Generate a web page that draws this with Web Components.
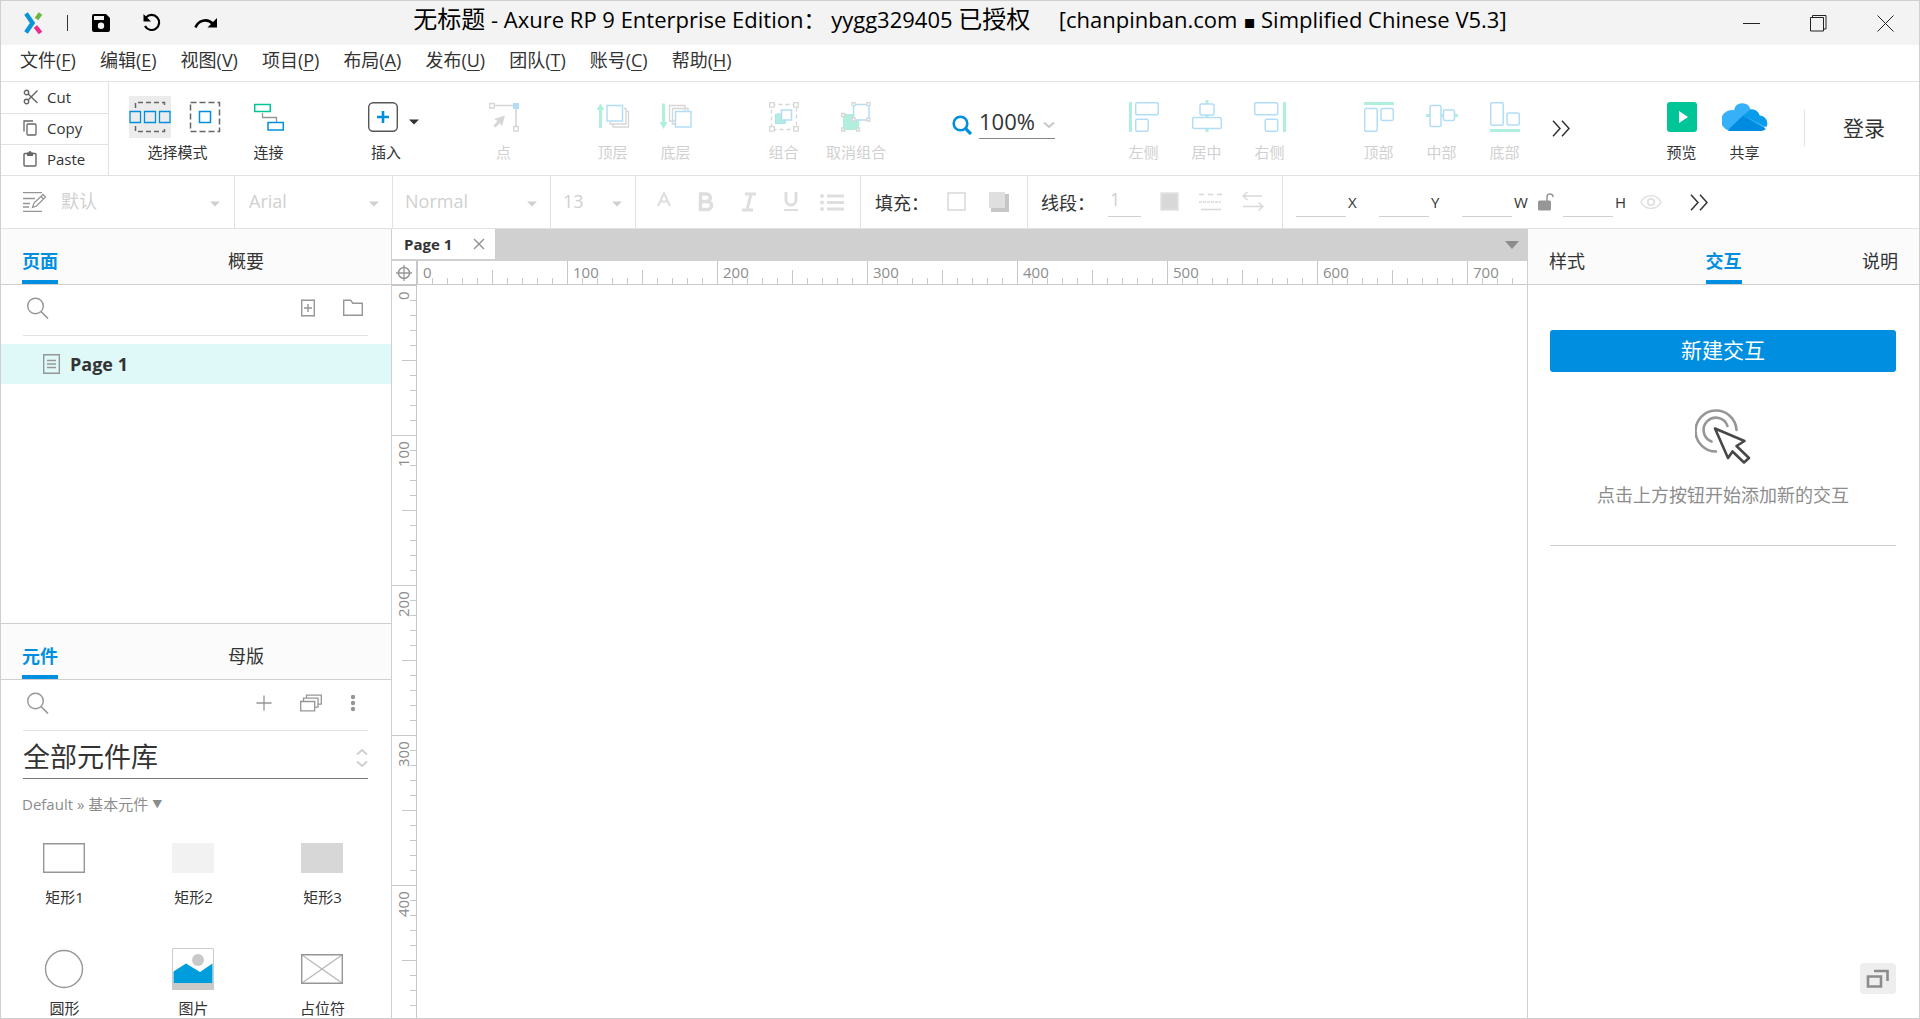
<!DOCTYPE html>
<html lang="zh-CN">
<head>
<meta charset="utf-8">
<title>无标题 - Axure RP 9</title>
<style>
    :root {
        --blue: #008fe0;
        --green: #00c596;
        --line: #e2e2e2;
        --edge: #cfcfcf;
        --text: #333;
        --muted: #8c8c8c;
        --off: #d0d0d0;
    }
    * { box-sizing: border-box; }
    body {
        margin: 0;
        color: var(--text);
        font-family: "Open Sans", "Noto Sans CJK SC", sans-serif;
    }
    main {
        display: grid;
        grid-template-columns: 391px minmax(0, 1fr) 392px;
        min-height: 0;
    }
    .left {
        display: grid;
        grid-template-rows: 394px minmax(0, 1fr);
        min-height: 0;
        border-right: 1px solid var(--edge);
    }
</style>
</head>
<body>
<app-window>
    <title-bar></title-bar>
    <menu-bar></menu-bar>
    <main-toolbar></main-toolbar>
    <format-bar></format-bar>
    <main>
        <div class="left">
            <pages-panel></pages-panel>
            <library-panel></library-panel>
        </div>
        <design-canvas></design-canvas>
        <interaction-panel></interaction-panel>
    </main>
</app-window>

<script>
const GREY = '#969696';
const OFF = '#d6d6d6';
const OFF_BLUE = '#b3ddf6';
const OFF_GREEN = '#b0eedd';

// [width, height, markup]
const ICONS = {
    logo: [20, 24, '<path d="M3 2.5 9.5 12 3 21.5" fill="none" stroke="#0c94d8" stroke-width="4.4"/><path d="M17.5 2.5 13.5 8" stroke="#6cb644" stroke-width="4.4"/><path d="M12.5 15.5 17.5 22" stroke="#ee2a8b" stroke-width="4.4"/>'],
    save: [18, 18, '<path fill="#000" fill-rule="evenodd" d="M2 0h12l4 4v12a2 2 0 0 1-2 2H2a2 2 0 0 1-2-2V2a2 2 0 0 1 2-2zm0 2v4h10V2zm7 6.500a3.200 3.200 0 1 0 0 6.400 3.200 3.200 0 0 0 0-6.400z"/>'],
    undo: [20, 20, '<path d="M4 4.500A7.500 7.500 0 1 1 3 13" fill="none" stroke="#000" stroke-width="2.200"/><path d="M1.500 1v7.500H9z"/>'],
    redo: [24, 12, '<path d="M1.500 10.500C4 3.500 13 .5 19 7" fill="none" stroke="#000" stroke-width="2.600"/><path d="M23 1v9.500h-9.500z"/>'],
    minimise: [17, 17, '<path d="M0 8.500h17" stroke="#222"/>'],
    maximise: [17, 17, '<path d="M.5 2.500h13v13.500H.5zM2.500 2.500V.5h13.500v13.500h-2.500" fill="none" stroke="#222"/>'],
    close: [17, 17, '<path d="M.5.500l16 16M16.500.500l-16 16" stroke="#222"/>'],
    cut: [16, 16, '<g fill="none" stroke="#666" stroke-width="1.400"><circle cx="3.500" cy="3.500" r="2.200"/><circle cx="3.500" cy="12.500" r="2.200"/><path d="M5.200 5 14.500 14M5.200 11 14.500 1.500"/></g>'],
    copy: [14, 16, '<g fill="none" stroke="#666" stroke-width="1.300"><path d="M1 11.500V1h9"/><rect x="4" y="4" width="9" height="11" rx="1"/></g>'],
    paste: [14, 16, '<rect x="1" y="2.500" width="12" height="12.500" rx="1" fill="none" stroke="#666" stroke-width="1.400"/><path d="M4 1.500h1.500a1.500 1.500 0 0 1 3 0H10V5H4z" fill="#666"/>'],
    intersect: [42, 42, '<path d="M6.500 12V6.500h29V12M6.500 30v5.500h29V30" fill="none" stroke="#666" stroke-width="1.500" stroke-dasharray="5 3"/><g fill="#ececec" stroke="#008fe0" stroke-width="1.300"><path d="M1 15.500h10.500v11H1zM15.500 15.500h11v11h-11zM30.500 15.500H41v11H30.500z"/></g>'],
    contain: [42, 42, '<rect x="6.500" y="6.500" width="29" height="29" fill="none" stroke="#666" stroke-width="1.500" stroke-dasharray="6 3"/><path d="M15.500 15.500h11v11h-11z" fill="#fff" stroke="#008fe0" stroke-width="1.500"/>'],
    connect: [30, 30, '<path d="M8.500 11v4.500h14V20" fill="none" stroke="#969696" stroke-width="1.300"/><path d="M.7 2.500h15.500v7H.7z" fill="none" stroke="#00c596" stroke-width="1.500"/><path d="M14 20.500h15.300v7.500H14z" fill="none" stroke="#008fe0" stroke-width="1.500"/>'],
    insert: [30, 30, '<rect x=".7" y=".7" width="28.600" height="28.600" rx="4.500" fill="none" stroke="#555" stroke-width="1.400"/><path d="M15 9v12M9 15h12" stroke="#008fe0" stroke-width="2.600"/>'],
    point: [30, 30, `<path d="M5 3.500h20M27 6v18" stroke="${OFF}" stroke-width="1.600"/><path d="M.7 1.500h4.500V6H.7zM24.700 24.500h4.500V29h-4.500z" fill="#fff" stroke="${OFF}" stroke-width="1.300"/><path d="M24 1h6v6h-6z" fill="${OFF_BLUE}"/><path d="M16 13.500 5 17l3.500 2-4 4.500 2 2 4.500-4.500 2 3.500z" fill="${OFF}"/>`],
    front: [34, 30, `<path d="M4.500 26V5" stroke="${OFF_GREEN}" stroke-width="3"/><path d="M.5 8 4.500 1.500 8.500 8z" fill="${OFF_GREEN}"/><g fill="none" stroke="${OFF}" stroke-width="1.300"><path d="M28 6.500h2V22H14v-2M30 9.500h2.500v15.500H17v-3"/></g><path d="M11 3.500h15.500V19H11z" fill="#fff" stroke="${OFF_BLUE}" stroke-width="1.500"/>`],
    back: [34, 30, `<path d="M4.500 1.500V22" stroke="${OFF_GREEN}" stroke-width="3"/><path d="M.5 20 4.500 27 8.500 20z" fill="${OFF_GREEN}"/><g fill="#fff" stroke="${OFF}" stroke-width="1.300"><path d="M10.500 3.500H26V19H10.500zM13.500 6.500H29V22H13.500z"/></g><path d="M16.500 9.500H32V25H16.500z" fill="#fff" stroke="${OFF_BLUE}" stroke-width="1.500"/>`],
    group: [30, 30, `<path d="M2.500 2.500h25v25h-25z" fill="none" stroke="${OFF}" stroke-width="1.300" stroke-dasharray="4 3"/><g fill="#fff" stroke="${OFF}" stroke-width="1.300"><path d="M.7.700h4.500v4.500H.7zM24.700.700h4.500v4.500h-4.500zM.7 24.700h4.500v4.500H.7zM24.700 24.700h4.500v4.500h-4.500z"/></g><path d="M6 12h11v10H6z" fill="${OFF_GREEN}"/><path d="M6.500 12h9v9.500h-9z" fill="none" stroke="${OFF_BLUE}"/><path d="M12.500 8h10v10h-10z" fill="#fff" stroke="${OFF_BLUE}" stroke-width="1.500"/>`],
    ungroup: [30, 30, `<path d="M2 12h16v16H2z" fill="${OFF_GREEN}"/><path d="M12.500 2.500h15.500V18H12.500z" fill="#fff" stroke="${OFF_BLUE}" stroke-width="1.500"/><g fill="#fff" stroke="${OFF}" stroke-width="1.300"><path d="M11 .7h3v3h-3zM26 .7h3v3h-3zM26 16h3v3h-3zM11 16h3v3h-3zM.7 11.500h3v3h-3zM.7 26h3v3h-3zM15.500 26h3v3h-3z"/></g>`],
    zoom: [20, 20, '<circle cx="8.500" cy="8.500" r="6.800" fill="none" stroke="#008fe0" stroke-width="2.600"/><path d="M13.500 13.500 19 19" stroke="#008fe0" stroke-width="3.200"/>'],
    chevron: [12, 8, '<path d="M1 1.500 6 6l5-4.500" fill="none" stroke="#c8c8c8" stroke-width="2"/>'],
    caret: [10, 6, '<path d="M0 .5h10L5 5.500z" fill="currentColor"/>'],
    caretBig: [14, 8, '<path d="M0 0h14L7 8z" fill="currentColor"/>'],
    alignLeft: [30, 30, `<path d="M1.500 0v30" stroke="${OFF_GREEN}" stroke-width="3"/><g fill="none" stroke="${OFF_BLUE}" stroke-width="1.500"><rect x="6.700" y=".7" width="22.600" height="12" rx="1.500"/><rect x="6.700" y="17.200" width="12.500" height="12" rx="1.500"/></g>`],
    alignCenter: [30, 34, `<path d="M15 0v32" stroke="${OFF_GREEN}" stroke-width="3"/><g fill="#fff" stroke="${OFF_BLUE}" stroke-width="1.500"><rect x="8" y="4" width="14" height="11" rx="1.500"/><rect x=".7" y="17.500" width="28.600" height="11" rx="1.500"/></g>`],
    alignRight: [32, 30, `<path d="M30.500 0v30" stroke="${OFF_GREEN}" stroke-width="3"/><g fill="none" stroke="${OFF_BLUE}" stroke-width="1.500"><rect x=".7" y=".7" width="23" height="12" rx="1.500"/><rect x="11.200" y="17.200" width="12.500" height="12" rx="1.500"/></g>`],
    alignTop: [30, 30, `<path d="M0 1.500h30" stroke="${OFF_GREEN}" stroke-width="3"/><g fill="none" stroke="${OFF_BLUE}" stroke-width="1.500"><rect x=".7" y="6.500" width="12.500" height="22.800" rx="1.500"/><rect x="17" y="6.500" width="12.300" height="12" rx="1.500"/></g>`],
    alignMiddle: [32, 30, `<path d="M0 13.500h32" stroke="${OFF_GREEN}" stroke-width="3"/><g fill="#fff" stroke="${OFF_BLUE}" stroke-width="1.500"><rect x="4" y="3.500" width="11" height="21" rx="1.500"/><rect x="17.500" y="8" width="11" height="10.500" rx="1.500"/></g>`],
    alignBottom: [30, 30, `<path d="M0 28.500h30" stroke="${OFF_GREEN}" stroke-width="3"/><g fill="none" stroke="${OFF_BLUE}" stroke-width="1.500"><rect x=".7" y=".7" width="12.500" height="22.500" rx="1.500"/><rect x="17" y="11" width="12.300" height="12" rx="1.500"/></g>`],
    more: [18, 17, '<path d="M1 .7 8 8.500 1 16.300M10 .7l7 7.800-7 7.800" fill="none" stroke="#333" stroke-width="1.500"/>'],
    preview: [30, 30, '<rect width="30" height="30" rx="3" fill="#00c596"/><path d="M12 9v12l9-6z" fill="#fff"/>'],
    cloud: [46, 30, '<path d="M7.500 29A10.500 10.500 0 0 1 12 8.200 8.500 8.500 0 0 1 28.500 7.500 8 8 0 0 1 37.500 13.500 8 8 0 0 1 37.500 29z" fill="#36b0f8"/><path d="M21 13.500 28.500 7.500A8 8 0 0 1 37.500 13.500 8 8 0 0 1 44.500 25z" fill="#089ceb"/><path d="M6 28 21 13.500 44 27a8 8 0 0 1-6.500 2h-30z" fill="#008be0"/>'],
    styleEdit: [24, 20, `<g fill="none" stroke="${GREY}" stroke-width="1.300"><path d="M0 .7h19M0 6.500h12M0 11.500h7M0 15h6M0 19.300h19"/><path d="M9.500 15.500 11 11 20 2.500l2.500 2.500-9 9zM18 4.500l2.500 2.500"/></g>`],
    bold: [16, 20, `<path d="M2.500 2h6a3.700 3.700 0 0 1 0 7.500h-6zM2.500 9.500h7a4 4 0 0 1 0 8h-7z" fill="none" stroke="#dedede" stroke-width="3.500"/>`],
    italic: [16, 20, '<path d="M4 2h11M1 18h11M10 2 6 18" stroke="#dedede" stroke-width="3"/>'],
    underline: [14, 20, '<path d="M2 0v8a5 5 0 0 0 10 0V0" fill="none" stroke="#dedede" stroke-width="3"/><path d="M0 18h14" stroke="#dedede" stroke-width="2"/>'],
    colour: [14, 20, '<path d="M1 14 7 1l6 13M3 9.500h8" fill="none" stroke="#dedede" stroke-width="2"/>'],
    list: [24, 20, '<path d="M7 4h17M7 10.500h17M7 17h17" stroke="#dedede" stroke-width="3"/><g fill="#dedede"><circle cx="2" cy="4" r="2"/><circle cx="2" cy="10.500" r="2"/><circle cx="2" cy="17" r="2"/></g>'],
    fill: [20, 20, '<path d="M1 1h17v17H1z" fill="#fff" stroke="#d8d8d8" stroke-width="1.500"/>'],
    shadow: [20, 20, '<path d="M2 2h18v18H2z" fill="#c6c6c6"/><path d="M0 0h16v16H0z" fill="#dfdfdf"/>'],
    lineColour: [20, 20, '<path d="M1 1h17v17H1z" fill="#d8d8d8" stroke="#e2e2e2" stroke-width="1.500"/>'],
    dashes: [24, 20, '<g stroke="#d8d8d8" stroke-width="1.500"><path d="M0 2.500h24" stroke-dasharray="5 4"/><path d="M0 10h22" stroke-dasharray="3 1"/><path d="M2 17.500h20"/></g>'],
    arrows: [22, 20, '<path d="M20 4H1M5.500 0 1 4l4.500 4M1 14.500h20M16.500 10.500l4.500 4-4.500 4" fill="none" stroke="#d8d8d8" stroke-width="1.500"/>'],
    lock: [16, 18, '<rect y="7.500" width="13" height="10" rx="1.500" fill="#969696"/><path d="M9 8V4a3 3 0 0 1 6 0" fill="none" stroke="#969696" stroke-width="1.500"/>'],
    eye: [22, 16, '<path d="M1 8C5-.5 17-.5 21 8 17 16.500 5 16.500 1 8z" fill="none" stroke="#e0e0e0" stroke-width="1.500"/><circle cx="11" cy="8" r="3.200" fill="none" stroke="#e0e0e0" stroke-width="1.800"/>'],
    search: [22, 22, `<circle cx="8.500" cy="9" r="7.800" fill="none" stroke="${GREY}" stroke-width="1.400"/><path d="m14 14.500 7 7" stroke="${GREY}" stroke-width="1.600"/>`],
    addPage: [14, 18, `<path d="M.7 1.200h12.600v15.600H.7zM7 5v8M3 9h8" fill="none" stroke="${GREY}" stroke-width="1.400"/>`],
    folder: [20, 18, `<path d="M.7 16.300V1.200h7l2 3h9.600v12.100z" fill="none" stroke="${GREY}" stroke-width="1.400"/>`],
    page: [18, 20, `<path d="M.7.700h15.600v18.600H.7zM4 6.500h9M4 10h9M4 13.500h9" fill="none" stroke="${GREY}" stroke-width="1.400"/>`],
    plus: [16, 16, `<path d="M8 .5v15M.5 8h15" stroke="${GREY}" stroke-width="1.300"/>`],
    stack: [22, 18, `<g fill="none" stroke="${GREY}" stroke-width="1.300"><path d="M.7 7.500h14v9.300H.7zM3.500 7V4.200h14.500v9H15M6.500 4V1.200h14.800v9h-3"/></g>`],
    dots: [6, 18, `<g fill="${GREY}"><circle cx="3" cy="3" r="2.200"/><circle cx="3" cy="9" r="2.200"/><circle cx="3" cy="15" r="2.200"/></g>`],
    updown: [12, 20, '<path d="M1 6.500 6 2l5 4.500M1 13.500 6 18l5-4.500" fill="none" stroke="#cfcfcf" stroke-width="2"/>'],
    rect1: [42, 42, '<path d="M.7 6.700h40.600v28.600H.7z" fill="#fff" stroke="#969696" stroke-width="1.400"/>'],
    rect2: [42, 42, '<path d="M0 6h42v30H0z" fill="#f2f2f2"/>'],
    rect3: [42, 42, '<path d="M0 6h42v30H0z" fill="#d7d7d7"/>'],
    circle: [42, 42, '<circle cx="21" cy="21" r="18.500" fill="#fff" stroke="#969696" stroke-width="1.400"/>'],
    image: [42, 42, '<path d="M.5.500h41v41H.5z" fill="#fff" stroke="#ccc"/><path d="M0 35h42v7H0z" fill="#c9cac8"/><circle cx="26" cy="12" r="6" fill="#c9cac8"/><path d="M1.500 23.500 14 15.500l14 8.500 12.500-8.500V35h-39z" fill="#009ddc"/>'],
    placeholder: [42, 42, '<path d="M.7 6.700 41.300 35.300M41.300 6.700.7 35.300" stroke="#b8b8b8" stroke-width="1.300"/><path d="M.7 6.700h40.600v28.600H.7z" fill="none" stroke="#969696" stroke-width="1.400"/>'],
    tabClose: [12, 12, `<path d="m1 1 10 10M11 1 1 11" stroke="${GREY}" stroke-width="1.500"/>`],
    origin: [16, 16, `<circle cx="8" cy="8" r="5.500" fill="none" stroke="${GREY}" stroke-width="1.500"/><path d="M8 0v16M0 8h16" stroke="${GREY}" stroke-width="1.300"/>`],
    tap: [56, 56, '<g fill="none" stroke="#969696" stroke-width="2.600" stroke-linecap="round"><path d="M21 42.500A20.500 20.500 0 1 1 41.500 21"/><path d="M16.500 32.500A12.300 12.300 0 1 1 32.500 17"/></g><path d="M20 19.500 49.500 32l-8 5L54 49l-5 4.500L37.500 42.500 33 49z" fill="#fff" stroke="#484848" stroke-width="2.600" stroke-linejoin="round"/>'],
    windows: [24, 20, '<path d="M2 7.500h13v10H2z" fill="none" stroke="#8c8c8c" stroke-width="2.600"/><path d="M8 2h13.500v10" fill="none" stroke="#8c8c8c" stroke-width="2.600"/>']
};

const BASE = `
    *, *::before { box-sizing: border-box; }
    button { margin: 0; padding: 0; border: 0; background: none; color: inherit; font: inherit; }
    input, select { margin: 0; padding: 0; border: 0; border-radius: 0; background: none; color: inherit; font: inherit; appearance: none; opacity: 1; min-width: 0; }
`;

class UiIcon extends HTMLElement {
    connectedCallback() {
        this.attachShadow({ mode: 'open' });
        const [w, h, body] = ICONS[this.getAttribute('name')];
        this.shadowRoot.innerHTML = `
            <style>
                :host { display: block; flex: none; }
                svg { display: block; }
            </style>
            <svg width="${w}" height="${h}" viewBox="0 0 ${w} ${h}" aria-hidden="true">${body}</svg>
        `;
    }
}

class AppWindow extends HTMLElement {
    connectedCallback() {
        this.attachShadow({ mode: 'open' });
        this.shadowRoot.innerHTML = `
            <style>
                :host {
                    display: grid;
                    grid-template-rows: auto auto auto auto minmax(0, 1fr);
                    grid-template-columns: minmax(0, 1fr);
                    box-sizing: border-box;
                    height: 100vh;
                    overflow: hidden;
                    border: 1px solid var(--edge);
                    background: #fff;
                }
            </style>
            <slot></slot>
        `;
    }
}

class TitleBar extends HTMLElement {
    connectedCallback() {
        this.attachShadow({ mode: 'open' });
        this.shadowRoot.innerHTML = `
            <style>
                ${BASE}
                :host {
                    display: grid;
                    grid-template-columns: 1fr auto 1fr;
                    height: 44px;
                    background: #f3f3f3;
                    color: #000;
                }
                .quick { display: flex; align-items: center; gap: 32px; padding-left: 22px; }
                .sep { width: 1px; height: 16px; background: #333; margin: 0 -8px; }
                h1 { margin: 0; font-size: 22px; line-height: 36px; font-weight: 400; white-space: pre; }
                h1 span { font-size: 24px; }
                h1 i { font: 18px "DejaVu Sans", sans-serif; }
                .controls { display: flex; justify-content: flex-end; }
                .controls button { width: 67px; display: grid; place-items: center; }
            </style>
            <div class="quick">
                <ui-icon name="logo"></ui-icon>
                <span class="sep"></span>
                <button aria-label="保存"><ui-icon name="save"></ui-icon></button>
                <button aria-label="撤销"><ui-icon name="undo"></ui-icon></button>
                <button aria-label="重做"><ui-icon name="redo"></ui-icon></button>
            </div>
            <h1><span>无标题</span> - Axure RP 9 Enterprise Edition： yygg329405 <span>已授权</span>     [chanpinban.com <i>▪</i> Simplified Chinese V5.3]</h1>
            <div class="controls">
                <button aria-label="最小化"><ui-icon name="minimise"></ui-icon></button>
                <button aria-label="最大化"><ui-icon name="maximise"></ui-icon></button>
                <button aria-label="关闭"><ui-icon name="close"></ui-icon></button>
            </div>
        `;
    }
}

class MenuBar extends HTMLElement {
    connectedCallback() {
        const items = [['文件', 'F'], ['编辑', 'E'], ['视图', 'V'], ['项目', 'P'], ['布局', 'A'], ['发布', 'U'], ['团队', 'T'], ['账号', 'C'], ['帮助', 'H']];
        this.attachShadow({ mode: 'open' });
        this.shadowRoot.innerHTML = `
            <style>
                ${BASE}
                :host { display: block; border-bottom: 1px solid var(--line); }
                nav { display: flex; gap: 24px; height: 36px; padding: 0 0 6px 19px; }
                button { font-size: 18px; line-height: 30px; white-space: nowrap; }
                u { text-underline-offset: 3px; text-decoration-thickness: 1px; }
            </style>
            <nav>${items.map(([t, k]) => `<button>${t}(<u>${k}</u>)</button>`).join('')}</nav>
        `;
    }
}

class ToolButton extends HTMLElement {
    connectedCallback() {
        const off = this.hasAttribute('disabled') ? 'disabled' : '';
        this.attachShadow({ mode: 'open' });
        this.shadowRoot.innerHTML = `
            <style>
                ${BASE}
                :host { display: block; width: 63px; flex: none; }
                :host([wide]) { width: 82px; }
                button { width: 100%; display: flex; flex-direction: column; align-items: center; gap: 4px; }
                button:disabled { color: var(--off); }
                .icon { height: 42px; display: grid; place-items: center; }
                .label { font-size: 15px; line-height: 20px; white-space: nowrap; }
            </style>
            <button ${off}>
                <span class="icon"><slot></slot></span>
                <span class="label">${this.getAttribute('label')}</span>
            </button>
        `;
    }
}

class MainToolbar extends HTMLElement {
    connectedCallback() {
        const tool = (label, icon, attrs = 'disabled') =>
            `<tool-button label="${label}" ${attrs}><ui-icon name="${icon}"></ui-icon></tool-button>`;
        this.attachShadow({ mode: 'open' });
        this.shadowRoot.innerHTML = `
            <style>
                ${BASE}
                :host { display: flex; height: 94px; border-bottom: 1px solid var(--line); }
                .clip { flex: none; width: 108px; display: grid; grid-template-rows: repeat(3, 1fr); border-right: 1px solid var(--line); }
                .clip button { display: grid; grid-template-columns: 24px auto; justify-content: start; align-items: center; padding: 0 0 2px 22px; font-size: 15px; line-height: 20px; text-align: left; }
                .clip button + button { border-top: 1px solid var(--line); }
                .tools { flex: 1; display: flex; align-items: flex-start; padding: 14px 34px 0 20px; }
                .group { display: flex; }
                .modes { display: grid; grid-template-columns: 42px 42px; column-gap: 13px; row-gap: 4px; justify-items: center; margin-right: 11px; }
                .modes [aria-pressed="true"] { background: #ececec; }
                .label { font-size: 15px; line-height: 20px; }
                .modes .label { grid-column: 1 / -1; }
                .insert { display: grid; grid-template-columns: 30px 10px; column-gap: 11px; row-gap: 4px; margin: 0 53px 0 68px; }
                .insert .pic { height: 42px; display: flex; align-items: center; }
                .insert .pic + .pic { padding-top: 10px; }
                .insert .label { grid-column: 1 / -1; padding-left: 3px; text-align: left; }
                .order { margin-left: 46px; }
                .grouping { margin-left: 45px; }
                .zoom { display: grid; grid-template-columns: 20px 76px; column-gap: 7px; align-items: center; margin: 11px 57px 0 55px; }
                .zoom ui-icon { margin-top: 4px; }
                .zoom .box { display: grid; height: 32px; align-items: center; border-bottom: 1px solid #888; }
                .zoom .box > * { grid-area: 1 / 1; }
                .zoom select { width: 100%; padding-bottom: 4px; font-size: 22px; line-height: 28px; }
                .zoom .box ui-icon { justify-self: end; pointer-events: none; }
                .vertical { margin: 0 16px 0 46px; }
                .more { margin-top: 24px; }
                .publish { margin-left: auto; }
                .login { margin: 14px 0 0 28px; padding-left: 38px; height: 36px; border-left: 1px solid var(--line); font-size: 21px; line-height: 34px; }
            </style>
            <div class="clip">
                <button><ui-icon name="cut"></ui-icon>Cut</button>
                <button><ui-icon name="copy"></ui-icon>Copy</button>
                <button><ui-icon name="paste"></ui-icon>Paste</button>
            </div>
            <div class="tools">
                <div class="modes">
                    <button aria-label="相交选中" aria-pressed="true"><ui-icon name="intersect"></ui-icon></button>
                    <button aria-label="包含选中" aria-pressed="false"><ui-icon name="contain"></ui-icon></button>
                    <span class="label">选择模式</span>
                </div>
                ${tool('连接', 'connect', '')}
                <button class="insert">
                    <span class="pic"><ui-icon name="insert"></ui-icon></span>
                    <span class="pic"><ui-icon name="caret"></ui-icon></span>
                    <span class="label">插入</span>
                </button>
                ${tool('点', 'point')}
                <div class="group order">${tool('顶层', 'front')}${tool('底层', 'back')}</div>
                <div class="group grouping">${tool('组合', 'group')}${tool('取消组合', 'ungroup', 'wide disabled')}</div>
                <div class="zoom">
                    <ui-icon name="zoom"></ui-icon>
                    <div class="box">
                        <select aria-label="缩放"><option>100%</option></select>
                        <ui-icon name="chevron"></ui-icon>
                    </div>
                </div>
                <div class="group">${tool('左侧', 'alignLeft')}${tool('居中', 'alignCenter')}${tool('右侧', 'alignRight')}</div>
                <div class="group vertical">${tool('顶部', 'alignTop')}${tool('中部', 'alignMiddle')}${tool('底部', 'alignBottom')}</div>
                <button class="more" aria-label="更多"><ui-icon name="more"></ui-icon></button>
                <div class="group publish">${tool('预览', 'preview', '')}${tool('共享', 'cloud', '')}</div>
                <button class="login">登录</button>
            </div>
        `;
    }
}

class FormatBar extends HTMLElement {
    connectedCallback() {
        const pick = (name, value, cls = '') => `
            <div class="cell pick ${cls}">
                <select aria-label="${name}" disabled><option>${value}</option></select>
                <ui-icon name="caret"></ui-icon>
            </div>`;
        const icon = (name, label) => `<button disabled aria-label="${label}"><ui-icon name="${name}"></ui-icon></button>`;
        const field = name => `<span class="field"><input id="${name}" type="text" disabled><label for="${name}">${name.toUpperCase()}</label></span>`;
        this.attachShadow({ mode: 'open' });
        this.shadowRoot.innerHTML = `
            <style>
                ${BASE}
                :host { display: flex; height: 53px; border-bottom: 1px solid var(--line); font-size: 18px; }
                .cell { display: flex; align-items: center; flex: none; border-right: 1px solid var(--line); }
                .pick { display: grid; align-items: center; padding: 0 13px 0 12px; color: var(--off); }
                .pick > * { grid-area: 1 / 1; }
                .pick select { width: 100%; line-height: 24px; padding-bottom: 2px; opacity: 1; }
                .pick > ui-icon { justify-self: end; padding-top: 4px; pointer-events: none; }
                .style { width: 234px; padding: 0 14px 0 22px; }
                .style .mark { justify-self: start; padding: 0; }
                .style select { padding-left: 38px; }
                .font, .weight { width: 158px; }
                .font { padding-left: 14px; }
                .size { width: 85px; }
                .text { width: 225px; gap: 27px; padding-left: 21px; }
                .text button:last-child { margin-left: -5px; }
                .fill { width: 167px; padding-left: 14px; }
                .fill span { margin-right: 18px; }
                .fill button + button { margin-left: 22px; }
                .stroke { width: 255px; padding-left: 13px; gap: 19px; }
                .stroke label { margin-right: -6px; }
                .stroke input { width: 33px; height: 30px; padding: 0 0 6px 2px; border-bottom: 1px solid var(--off); color: var(--off); }
                .place { display: flex; align-items: center; padding-left: 13px; }
                .field { display: flex; align-items: center; gap: 2px; width: 83px; }
                .field input { width: 50px; height: 30px; border-bottom: 1px solid var(--off); }
                .field label { font-size: 15px; }
                .lock { margin: 0 9px 0 -7px; }
                .eye { margin-left: -6px; }
                .more { margin-left: 28px; }
            </style>
            <div class="cell pick style">
                <ui-icon class="mark" name="styleEdit"></ui-icon>
                <select aria-label="样式" disabled><option>默认</option></select>
                <ui-icon name="caret"></ui-icon>
            </div>
            ${pick('字体', 'Arial', 'font')}
            ${pick('字重', 'Normal', 'weight')}
            ${pick('字号', '13', 'size')}
            <div class="cell text">
                ${icon('colour', '文字颜色')}${icon('bold', '粗体')}${icon('italic', '斜体')}${icon('underline', '下划线')}${icon('list', '列表')}
            </div>
            <div class="cell fill">
                <span>填充：</span>${icon('fill', '填充颜色')}${icon('shadow', '阴影')}
            </div>
            <div class="cell stroke">
                <label for="stroke">线段：</label><input id="stroke" type="text" value="1" disabled>
                ${icon('lineColour', '线段颜色')}${icon('dashes', '线段类型')}${icon('arrows', '箭头')}
            </div>
            <div class="place">
                ${field('x')}${field('y')}${field('w')}
                <button class="lock" aria-label="锁定比例"><ui-icon name="lock"></ui-icon></button>
                ${field('h')}
                <button class="eye" disabled aria-label="可见"><ui-icon name="eye"></ui-icon></button>
                <button class="more" aria-label="更多"><ui-icon name="more"></ui-icon></button>
            </div>
        `;
    }
}

class PanelTabs extends HTMLElement {
    connectedCallback() {
        const active = this.getAttribute('active');
        const tabs = this.getAttribute('tabs').split(',');
        this.attachShadow({ mode: 'open' });
        this.shadowRoot.innerHTML = `
            <style>
                ${BASE}
                :host { display: flex; height: 56px; padding: 0 21px; background: #fbfbfb; border-bottom: 1px solid var(--edge); }
                :host([split]) { gap: 170px; }
                :host([spread]) { justify-content: space-between; }
                button { padding-top: 12px; border-bottom: 4px solid transparent; font-size: 18px; line-height: 26px; }
                button[aria-selected="true"] { color: var(--blue); border-color: var(--blue); font-weight: 700; }
            </style>
            ${tabs.map(t => `<button role="tab" aria-selected="${t === active}">${t}</button>`).join('')}
        `;
    }
}

class PagesPanel extends HTMLElement {
    connectedCallback() {
        this.attachShadow({ mode: 'open' });
        this.shadowRoot.innerHTML = `
            <style>
                ${BASE}
                :host { display: block; }
                .bar { display: flex; align-items: center; height: 51px; margin: 0 23px 0 22px; padding: 0 5px 4px 4px; border-bottom: 1px solid var(--line); }
                .bar button:nth-child(2) { margin-left: auto; margin-right: 28px; }
                .row { display: flex; align-items: center; gap: 9px; width: 100%; height: 40px; margin-top: 8px; padding-left: 42px; background: #dff9f9; font-size: 18px; font-weight: 700; }
            </style>
            <panel-tabs split tabs="页面,概要" active="页面"></panel-tabs>
            <div class="bar">
                <button aria-label="搜索"><ui-icon name="search"></ui-icon></button>
                <button aria-label="添加页面"><ui-icon name="addPage"></ui-icon></button>
                <button aria-label="添加文件夹"><ui-icon name="folder"></ui-icon></button>
            </div>
            <button class="row"><ui-icon name="page"></ui-icon>Page 1</button>
        `;
    }
}

class LibraryPanel extends HTMLElement {
    connectedCallback() {
        const widgets = [['矩形1', 'rect1'], ['矩形2', 'rect2'], ['矩形3', 'rect3'], ['圆形', 'circle'], ['图片', 'image'], ['占位符', 'placeholder']];
        this.attachShadow({ mode: 'open' });
        this.shadowRoot.innerHTML = `
            <style>
                ${BASE}
                :host { display: block; overflow: hidden; border-top: 1px solid var(--edge); }
                .bar { display: flex; align-items: center; gap: 28px; height: 51px; margin: 0 23px 0 22px; padding: 0 12px 4px 4px; border-bottom: 1px solid var(--line); }
                .bar button:first-child { margin-right: auto; }
                .library { display: grid; align-items: center; height: 48px; margin: 0 23px 0 22px; border-bottom: 1px solid #777; }
                .library > * { grid-area: 1 / 1; }
                .library select { width: 100%; padding-top: 4px; font-size: 27px; line-height: 40px; }
                .library ui-icon { justify-self: end; padding-top: 6px; pointer-events: none; }
                .crumb { display: block; margin: 15px 0 0 21px; font-size: 15px; line-height: 20px; color: var(--muted); white-space: nowrap; }
                .crumb small { font-size: 10px; vertical-align: 2px; }
                .widgets { display: grid; grid-template-columns: repeat(3, 129px); row-gap: 41px; margin: 23px 0 0 -1px; }
                .widgets button { display: flex; flex-direction: column; align-items: center; gap: 8px; font-size: 15px; line-height: 20px; }
                .widgets ui-icon { margin-right: 2px; }
            </style>
            <panel-tabs split tabs="元件,母版" active="元件"></panel-tabs>
            <div class="bar">
                <button aria-label="搜索"><ui-icon name="search"></ui-icon></button>
                <button aria-label="添加元件库"><ui-icon name="plus"></ui-icon></button>
                <button aria-label="元件库"><ui-icon name="stack"></ui-icon></button>
                <button aria-label="选项"><ui-icon name="dots"></ui-icon></button>
            </div>
            <div class="library">
                <select aria-label="元件库"><option>全部元件库</option></select>
                <ui-icon name="updown"></ui-icon>
            </div>
            <button class="crumb">Default » 基本元件 <small>▼</small></button>
            <div class="widgets">
                ${widgets.map(([t, i]) => `<button><ui-icon name="${i}"></ui-icon><span>${t}</span></button>`).join('')}
            </div>
        `;
    }
}

class CanvasRuler extends HTMLElement {
    connectedCallback() {
        const upright = this.hasAttribute('vertical');
        const side = upright ? 'right' : 'bottom';
        const length = upright ? this.clientHeight : this.clientWidth;
        // 100 units take 150px; a short tick every 10, a longer one every 50
        const tick = (step, len) => upright
            ? `repeating-linear-gradient(to bottom, #c8c8c8 0 1px, transparent 1px ${step}px) right top / ${len}px 100% no-repeat`
            : `repeating-linear-gradient(to right, #c8c8c8 0 1px, transparent 1px ${step}px) left bottom / 100% ${len}px no-repeat`;
        const labels = Array.from({ length: Math.ceil(length / 150) }, (_, i) => `<span>${i * 100}</span>`).join('');
        this.attachShadow({ mode: 'open' });
        this.shadowRoot.innerHTML = `
            <style>
                ${BASE}
                :host {
                    display: flex;
                    box-sizing: border-box;
                    overflow: hidden;
                    min-width: 0;
                    min-height: 0;
                    border-${side}: 1px solid #c8c8c8;
                    background: ${tick(15, 6)}, ${tick(75, 14)}, ${tick(150, 24)};
                    color: var(--muted);
                    font-size: 15px;
                    line-height: 22px;
                }
                :host([vertical]) { flex-direction: column; }
                span { flex: none; width: 150px; padding-left: 6px; }
                :host([vertical]) span { width: auto; height: 150px; padding: 0 0 6px; writing-mode: vertical-rl; transform: rotate(180deg); text-align: right; }
            </style>
            ${labels}
        `;
    }
}

class DesignCanvas extends HTMLElement {
    connectedCallback() {
        this.attachShadow({ mode: 'open' });
        this.shadowRoot.innerHTML = `
            <style>
                ${BASE}
                :host { display: grid; grid-template-rows: 32px 24px minmax(0, 1fr); grid-template-columns: 25px minmax(0, 1fr); min-height: 0; }
                .tabs { grid-column: 1 / -1; display: flex; align-items: center; justify-content: space-between; padding-right: 8px; background: #d0d0d0; color: var(--muted); }
                .tab { display: flex; align-items: center; height: 30px; align-self: flex-start; gap: 21px; padding: 0 10px 0 12px; background: #fff; color: var(--text); font-size: 15px; font-weight: 700; }
                .origin { display: grid; place-items: center; border-right: 1px solid #c8c8c8; border-bottom: 1px solid #c8c8c8; }
            </style>
            <div class="tabs">
                <div class="tab">Page 1<button aria-label="关闭标签"><ui-icon name="tabClose"></ui-icon></button></div>
                <button aria-label="标签列表"><ui-icon name="caretBig"></ui-icon></button>
            </div>
            <div class="origin"><ui-icon name="origin"></ui-icon></div>
            <canvas-ruler></canvas-ruler>
            <canvas-ruler vertical></canvas-ruler>
            <div></div>
        `;
    }
}

class InteractionPanel extends HTMLElement {
    connectedCallback() {
        this.attachShadow({ mode: 'open' });
        this.shadowRoot.innerHTML = `
            <style>
                ${BASE}
                :host { display: block; position: relative; border-left: 1px solid var(--edge); }
                .body { display: flex; flex-direction: column; align-items: center; margin: 0 23px 0 22px; padding-top: 45px; border-bottom: 1px solid var(--edge); height: 261px; }
                .new { width: 100%; height: 42px; border-radius: 3px; background: var(--blue); color: #fff; font-size: 21px; line-height: 40px; padding-bottom: 2px; }
                .body ui-icon { margin-top: 37px; }
                p { margin: 16px 0 0; color: var(--muted); font-size: 18px; line-height: 28px; }
                .float { position: absolute; right: 23px; bottom: 24px; width: 36px; height: 31px; display: grid; place-items: center; border-radius: 4px; background: #eee; }
            </style>
            <panel-tabs spread tabs="样式,交互,说明" active="交互"></panel-tabs>
            <div class="body">
                <button class="new">新建交互</button>
                <ui-icon name="tap"></ui-icon>
                <p>点击上方按钮开始添加新的交互</p>
            </div>
            <button class="float" aria-label="浮动面板"><ui-icon name="windows"></ui-icon></button>
        `;
    }
}

customElements.define('ui-icon', UiIcon);
customElements.define('app-window', AppWindow);
customElements.define('title-bar', TitleBar);
customElements.define('menu-bar', MenuBar);
customElements.define('tool-button', ToolButton);
customElements.define('main-toolbar', MainToolbar);
customElements.define('format-bar', FormatBar);
customElements.define('panel-tabs', PanelTabs);
customElements.define('pages-panel', PagesPanel);
customElements.define('library-panel', LibraryPanel);
customElements.define('design-canvas', DesignCanvas);
customElements.define('canvas-ruler', CanvasRuler);
customElements.define('interaction-panel', InteractionPanel);
</script>
</body>
</html>
